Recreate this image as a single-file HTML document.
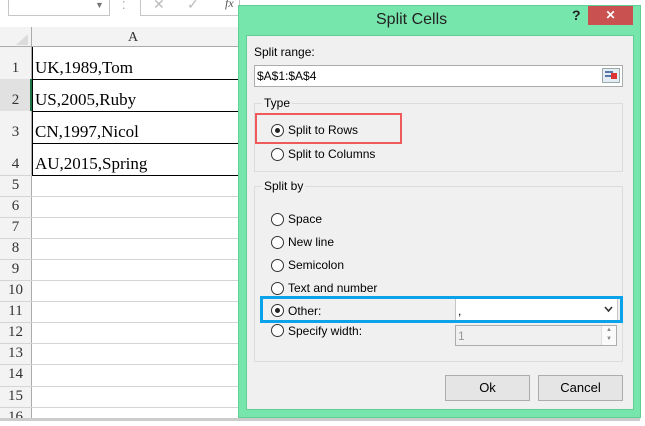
<!DOCTYPE html>
<html><head><style>
*{margin:0;padding:0;box-sizing:border-box}
body{width:645px;height:421px;overflow:hidden;background:#fff;position:relative;font-family:"Liberation Sans",sans-serif}
.a{position:absolute}
.rn{position:absolute;left:0;width:31px;text-align:center;font-family:"Liberation Serif",serif;font-size:15px;color:#333}
.hl{position:absolute;left:0;width:238px;height:1px;background:#d4d4d4}
.cell{position:absolute;left:35px;font-family:"Liberation Serif",serif;font-size:17px;color:#000}
.dl{position:absolute;font-size:12px;color:#000}
.rad{position:absolute;width:13px;height:13px;border:1px solid #333;border-radius:50%;background:#fff}
.rad.on::after{content:"";position:absolute;left:3px;top:3px;width:5px;height:5px;border-radius:50%;background:#222}
.btn{position:absolute;height:26px;border:1px solid #adadad;background:#e5e5e5;font-size:13px;text-align:center;line-height:24px}
</style></head><body>
<div class="a" style="left:0;top:0;width:645px;height:27px;background:#fff"></div>
<div class="a" style="left:8px;top:-2px;width:102px;height:18px;border:1px solid #c6c6c6"></div>
<div class="a" style="left:95px;top:0;font-size:9px;color:#777">▼</div>
<div class="a" style="left:122px;top:-1px;font-size:11px;color:#999">⁚</div>
<div class="a" style="left:140px;top:-2px;width:100px;height:18px;border:1px solid #c6c6c6"></div>
<div class="a" style="left:153px;top:-4px;font-size:14px;color:#bbb">✕</div>
<div class="a" style="left:187px;top:-4px;font-size:14px;color:#bbb">✓</div>
<div class="a" style="left:225px;top:-4px;font-size:12px;font-style:italic;color:#555;font-family:'Liberation Serif',serif">fx</div>
<div class="a" style="left:0;top:27px;width:238px;height:20px;background:#f3f3f3;border-bottom:1px solid #ababab"></div>
<div class="a" style="left:31px;top:27px;width:1px;height:394px;background:#ababab"></div>
<div class="a" style="left:16px;top:34px;width:0;height:0;border-left:12px solid transparent;border-bottom:11px solid #dcdcdc"></div>
<div class="a" style="left:128px;top:30px;font-size:14px;font-family:'Liberation Serif',serif;color:#333">A</div>
<div class="a" style="left:0;top:47px;width:31px;height:374px;background:#f3f3f3"></div>
<div class="a" style="left:0;top:79px;width:31px;height:32px;background:#e1e1e1"></div>
<div class="a" style="left:30px;top:79px;width:2px;height:32px;background:#217346"></div>
<div class="hl" style="top:175px"></div>
<div class="hl" style="top:196px"></div><div class="hl" style="top:217px"></div><div class="hl" style="top:238px"></div><div class="hl" style="top:259px"></div><div class="hl" style="top:280px"></div><div class="hl" style="top:301px"></div><div class="hl" style="top:322px"></div><div class="hl" style="top:343px"></div><div class="hl" style="top:364px"></div><div class="hl" style="top:386px"></div><div class="hl" style="top:407px"></div>
<div class="a" style="left:32px;top:47px;width:206px;height:129px;border-left:1px solid #000;border-bottom:1px solid #000"></div>
<div class="a" style="left:32px;top:79px;width:206px;height:1px;background:#000"></div>
<div class="a" style="left:32px;top:111px;width:206px;height:1px;background:#000"></div>
<div class="a" style="left:32px;top:143px;width:206px;height:1px;background:#000"></div>
<div class="rn" style="top:60px">1</div><div class="rn" style="top:92px">2</div><div class="rn" style="top:124px">3</div><div class="rn" style="top:156px">4</div>
<div class="rn" style="top:177px">5</div><div class="rn" style="top:198px">6</div><div class="rn" style="top:219px">7</div><div class="rn" style="top:240px">8</div><div class="rn" style="top:261px">9</div><div class="rn" style="top:282px">10</div><div class="rn" style="top:303px">11</div><div class="rn" style="top:324px">12</div><div class="rn" style="top:345px">13</div><div class="rn" style="top:366px">14</div><div class="rn" style="top:388px">15</div><div class="rn" style="top:409px">16</div>
<div class="cell" style="top:58px">UK,1989,Tom</div>
<div class="cell" style="top:90px">US,2005,Ruby</div>
<div class="cell" style="top:122px">CN,1997,Nicol</div>
<div class="cell" style="top:154px">AU,2015,Spring</div>
<div class="a" style="left:0;top:418px;width:645px;height:3px;background:#ccc"></div>
<div class="a" style="left:640px;top:0;width:5px;height:421px;background:#fff"></div>
<div class="a" style="left:238px;top:5px;width:403px;height:413px;background:#77e6ad;border:1px solid #5fcf95"></div>
<div class="a" style="left:376px;top:11px;font-size:16px;color:#222">Split Cells</div>
<div class="a" style="left:572px;top:7px;font-size:14px;font-weight:bold;color:#222">?</div>
<div class="a" style="left:588px;top:6px;width:45px;height:19px;background:#c9514f;color:#fff;text-align:center;font-size:12px;line-height:19px;font-weight:bold">✕</div>
<div class="a" style="left:246px;top:35px;width:388px;height:375px;background:#f0f0f0;border:1px solid #5fcf95"></div>
<div class="dl" style="left:254px;top:45px">Split range:</div>
<div class="a" style="left:254px;top:65px;width:369px;height:22px;background:#fff;border:1px solid #acacac"></div>
<div class="dl" style="left:257px;top:69px">$A$1:$A$4</div>
<div class="a" style="left:602px;top:68px;width:18px;height:15px;border:1px solid #9aa;background:#e4ecf4"></div>
<div class="a" style="left:605px;top:71px;width:8px;height:2px;background:#57a"></div>
<div class="a" style="left:605px;top:75px;width:8px;height:2px;background:#57a"></div>
<div class="a" style="left:611px;top:73px;width:6px;height:6px;background:#d33"></div>
<div class="a" style="left:254px;top:103px;width:369px;height:69px;border:1px solid #dcdcdc"></div>
<div class="dl" style="left:262px;top:96px;background:#f0f0f0;padding:0 2px">Type</div>
<div class="a" style="left:255px;top:113px;width:147px;height:31px;border:2px solid #f05a5a"></div>
<div class="rad on" style="left:271px;top:124px"></div><div class="dl" style="left:288px;top:123px">Split to Rows</div>
<div class="rad" style="left:271px;top:148px"></div><div class="dl" style="left:288px;top:147px">Split to Columns</div>
<div class="a" style="left:254px;top:186px;width:369px;height:176px;border:1px solid #dcdcdc"></div>
<div class="dl" style="left:262px;top:179px;background:#f0f0f0;padding:0 2px">Split by</div>
<div class="rad" style="left:271px;top:213px"></div><div class="dl" style="left:288px;top:212px">Space</div>
<div class="rad" style="left:271px;top:236px"></div><div class="dl" style="left:288px;top:235px">New line</div>
<div class="rad" style="left:271px;top:259px"></div><div class="dl" style="left:288px;top:258px">Semicolon</div>
<div class="rad" style="left:271px;top:282px"></div><div class="dl" style="left:288px;top:281px">Text and number</div>
<div class="rad on" style="left:271px;top:304px"></div><div class="dl" style="left:288px;top:304px">Other:</div>
<div class="rad" style="left:271px;top:324px"></div><div class="dl" style="left:288px;top:324px">Specify width:</div>
<div class="a" style="left:455px;top:297px;width:163px;height:25px;background:#fff;border:1px solid #c6c6c6"></div>
<div class="dl" style="left:458px;top:304px">,</div>
<svg class="a" style="left:604px;top:306px" width="9" height="7"><path d="M1 1 L4.5 5 L8 1" stroke="#333" stroke-width="1.6" fill="none"/></svg>
<div class="a" style="left:455px;top:325px;width:162px;height:21px;background:#f0f0f0;border:1px solid #acacac"></div>
<div class="dl" style="left:458px;top:329px;color:#999">1</div>
<div class="a" style="left:601px;top:326px;width:15px;height:19px;background:#fafafa;border-left:1px solid #ddd;font-size:6px;color:#888;text-align:center;line-height:9px">▲<br>▼</div>
<div class="a" style="left:260px;top:296px;width:363px;height:27px;border:3px solid #0aa2e8"></div>
<div class="btn" style="left:445px;top:375px;width:85px">Ok</div>
<div class="btn" style="left:538px;top:375px;width:85px">Cancel</div>
</body></html>
